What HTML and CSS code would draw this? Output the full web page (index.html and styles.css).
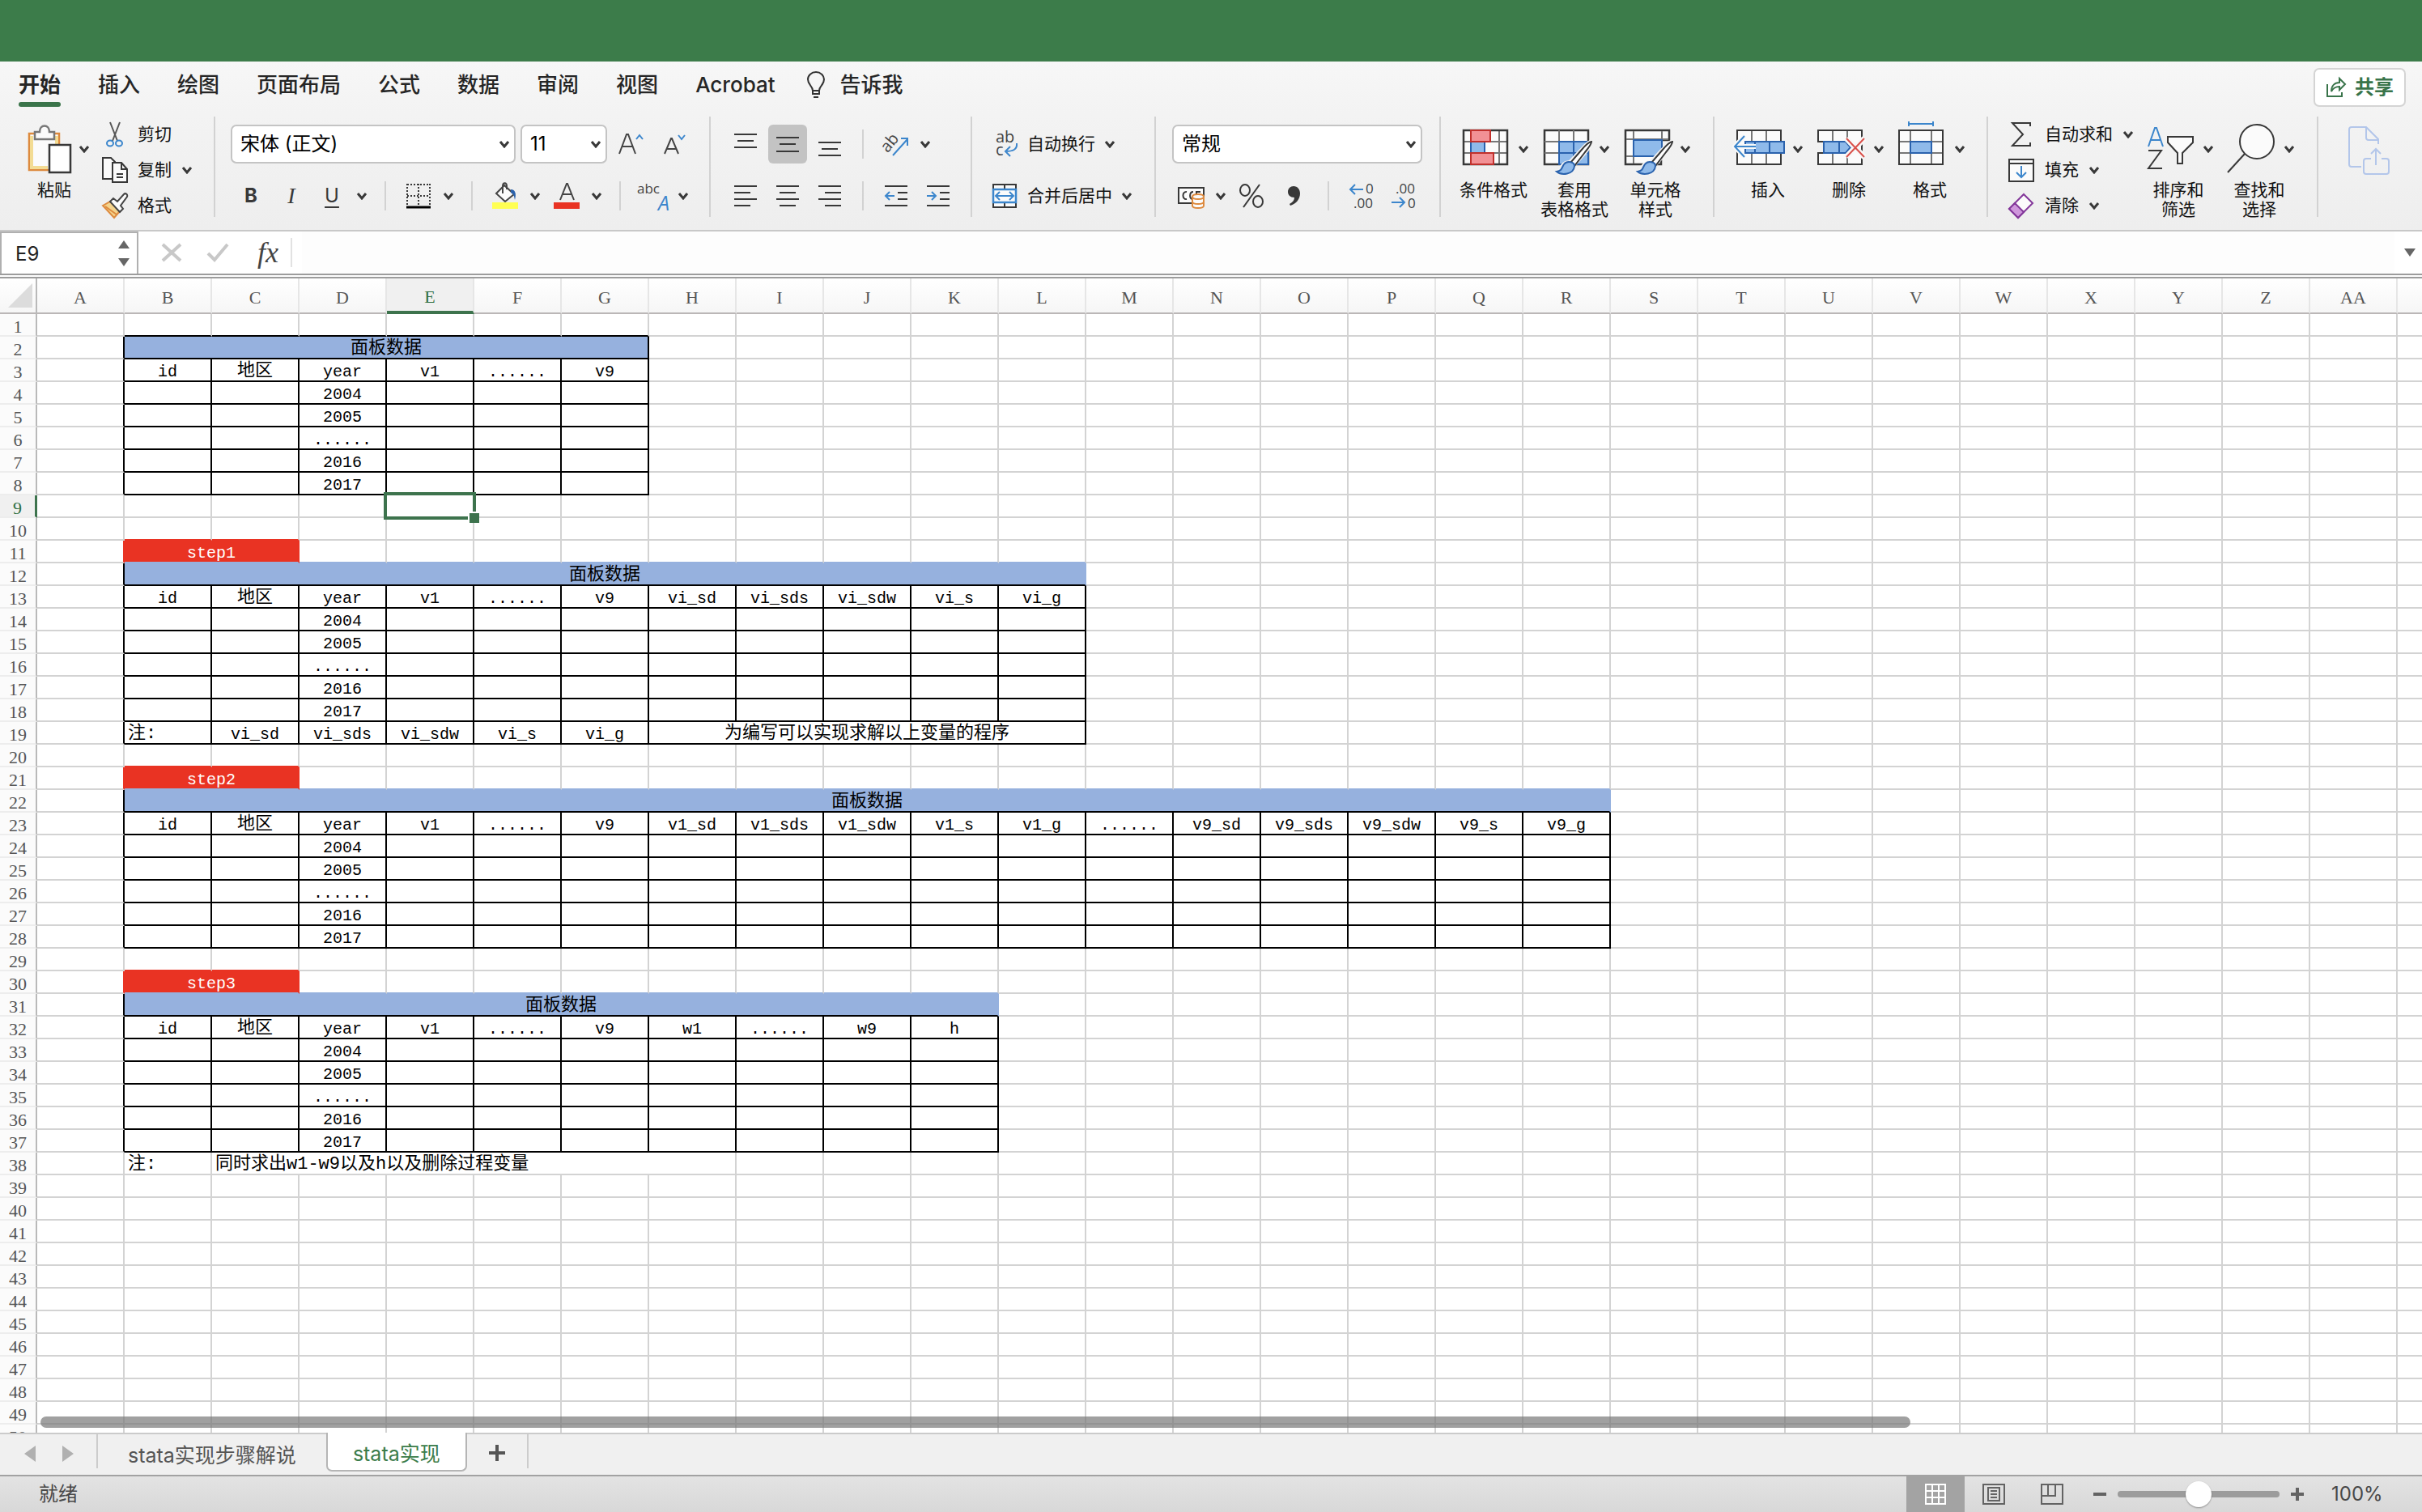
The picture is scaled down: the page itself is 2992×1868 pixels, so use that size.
FILE: index.html
```html
<!DOCTYPE html>
<html lang="zh-CN">
<head>
<meta charset="utf-8">
<title>stata实现</title>
<link rel="stylesheet" href="styles.css">
</head>
<body>
<svg class="defs" aria-hidden="true">
  <symbol id="chev" viewBox="0 0 14 10"><path d="M2 2l5 6 5-6" fill="none" stroke="#383838" stroke-width="3"/></symbol>
  <symbol id="brush" viewBox="0 0 64 68">
    <path d="M62 25c-3-1-8 4-13 10L34 51c-6-1-10 4-10 8-1 3-4 4-7 4 6 4 19 3 21-6l1-3 15-17c5-6 8-10 8-12z" fill="#f2f2f2" stroke="#f2f2f2" stroke-width="5"/>
    <path d="M61 25c-3 0-8 5-13 11L35 51l5 4 13-17c5-6 8-11 8-13z" fill="#fff" stroke="#383838" stroke-width="2"/>
    <path d="M40 55c0-5-9-7-13-2-3 4-2 8-9 9 6 5 21 4 22-7z" fill="#8fbaea" stroke="#2a62ad" stroke-width="2"/>
  </symbol>
</svg>

<header class="titlebar"></header>

<nav class="tabs">
  <button class="tab tab-on">开始</button>
  <button class="tab">插入</button>
  <button class="tab">绘图</button>
  <button class="tab">页面布局</button>
  <button class="tab">公式</button>
  <button class="tab">数据</button>
  <button class="tab">审阅</button>
  <button class="tab">视图</button>
  <button class="tab">Acrobat</button>
  <button class="tab tell">
    <svg width="24" height="34" viewBox="0 0 24 34" fill="none" stroke="#333" stroke-width="2"><path d="M8 24c0-6-6-7-6-14a10 9 0 0 1 20 0c0 7-6 8-6 14z"/><path d="M8 24v4h8v-4M9 32h6"/></svg>
    告诉我
  </button>
  <button class="share">
    <svg width="26" height="28" viewBox="0 0 26 28" fill="none" stroke="#39744a" stroke-width="2"><path d="M2 10v15h18v-5"/><path d="M7 19c0-7 4-11 10-11V3l7 7-7 7v-4c-5 0-8 2-10 6z"/></svg>
    共享
  </button>
</nav>

<section class="ribbon">
  <div class="group g-clip">
    <button class="big">
      <span class="pic"><svg width="64" height="68" viewBox="0 0 64 68" fill="none"><path d="M9 15h37v45H9z" fill="#fbfbfb" stroke="#dd8a3e" stroke-width="2.5"/><path d="M12 18v39h20M43 18v10" stroke="#f3dc94" stroke-width="4"/><path d="M16 22v-9h6c0-10 12-10 12 0h6v9z" fill="#fbfbfb" stroke="#777" stroke-width="2.5"/><path d="M34 29h26v34H34z" fill="#fff" stroke="#383838" stroke-width="2.5"/></svg>
      <svg class="chev"><use href="#chev"/></svg></span>
      <span>粘贴</span>
    </button>
    <div class="stack">
      <button class="line"><svg width="32" height="32" viewBox="0 0 32 32" fill="none" stroke-width="2"><path d="M10 1l9 23M22 1l-9 23" stroke="#555"/><ellipse cx="10" cy="27" rx="4" ry="3.500" stroke="#3c86cc"/><ellipse cx="21" cy="27" rx="4" ry="3.500" stroke="#3c86cc"/></svg>剪切</button>
      <button class="line"><svg width="32" height="32" viewBox="0 0 32 32" stroke="#383838" stroke-width="2" fill="#fbfbfb"><path d="M1 1h10l5 5v21H1z"/><path d="M13 7h11l7 8v16H13z"/><path d="M24 7v8h7M18 21h8M18 25h8" fill="none"/></svg>复制<svg class="chev"><use href="#chev"/></svg></button>
      <button class="line"><svg width="32" height="32" viewBox="0 0 32 32" stroke-width="2"><path d="M1 16l9-5 12 12-7 8z" fill="#f5d48c" stroke="#dd8a3e"/><path d="M4 17l14 10" stroke="#dd8a3e"/><path d="M10 11l4-4 5 4 8-9c2-2 5 0 4 3l-8 11 3 4-4 4z" fill="#fbfbfb" stroke="#444"/></svg>格式</button>
    </div>
  </div>

  <div class="group g-font">
    <div class="row">
      <label class="combo w-font"><select aria-label="字体"><option>宋体 (正文)</option></select><svg class="chev"><use href="#chev"/></svg></label>
      <label class="combo w-size"><select aria-label="字号"><option>11</option></select><svg class="chev"><use href="#chev"/></svg></label>
      <button class="tool t48" aria-label="增大字号"><svg width="34" height="32" viewBox="0 0 34 32" fill="none" stroke="#444" stroke-width="2"><path d="M2 28L11 4h2l9 24M6 19h12"/><path d="M23 10l4-5 4 5" stroke="#3c86cc"/></svg></button>
      <button class="tool t48" aria-label="减小字号"><svg width="34" height="32" viewBox="0 0 34 32" fill="none" stroke="#444" stroke-width="2"><path d="M4 28l8-19h1l8 19M7 22h11"/><path d="M21 5l4 5 4-5" stroke="#3c86cc"/></svg></button>
    </div>
    <div class="row flush">
      <button class="tool t50 bold">B</button>
      <button class="tool t50 ital">I</button>
      <button class="tool t50 under">U</button>
      <button class="caret" aria-label="下划线选项"><svg class="chev"><use href="#chev"/></svg></button>
      <span class="sep"></span>
      <button class="tool t40" aria-label="边框"><svg width="32" height="32" viewBox="0 0 32 32" fill="none" stroke="#383838" stroke-width="2"><path d="M2 2h28M2 16h28M2 1v27M16 1v27M30 1v27" stroke-dasharray="2 2"/><path d="M1 30h30" stroke="#000" stroke-width="3"/></svg></button>
      <button class="caret gap5" aria-label="边框选项"><svg class="chev"><use href="#chev"/></svg></button>
      <span class="sep"></span>
      <button class="tool t40" aria-label="填充颜色"><svg width="34" height="34" viewBox="0 0 34 34" fill="none"><path d="M6 14L16 4l12 11-11 9z" fill="#fbfbfb" stroke="#444" stroke-width="2"/><path d="M14 14V5c0-5 5-5 5 0v4" stroke="#444" stroke-width="2"/><path d="M24 9c6 0 7 6 5 13-1-6-2-8-5-9z" fill="#2a62ad"/><path d="M1 25h32v8H1z" fill="#ffff54"/></svg></button>
      <button class="caret gap5" aria-label="填充颜色选项"><svg class="chev"><use href="#chev"/></svg></button>
      <button class="tool t40 gap7" aria-label="字体颜色"><svg width="34" height="34" viewBox="0 0 34 34" fill="none"><path d="M9 22l8-20h1l8 20M12 15h11" stroke="#444" stroke-width="2"/><path d="M1 25h32v8H1z" fill="#e93323"/></svg></button>
      <button class="caret gap5" aria-label="字体颜色选项"><svg class="chev"><use href="#chev"/></svg></button>
      <span class="sep"></span>
      <button class="tool t40 abc"><span>abc</span><i>A</i></button>
      <button class="caret gap5" aria-label="拼音选项"><svg class="chev"><use href="#chev"/></svg></button>
    </div>
  </div>

  <div class="group g-align">
    <div class="row narrow">
      <button class="tool t48" aria-label="顶端对齐"><svg width="28" height="28" viewBox="0 0 28 28" stroke="#383838" stroke-width="2"><path d="M0 2h28M4 10h20M0 18h28"/></svg></button>
      <button class="tool t48 on" aria-label="垂直居中"><svg width="28" height="28" viewBox="0 0 28 28" stroke="#383838" stroke-width="2"><path d="M0 6h28M4 14h20M0 23h28"/></svg></button>
      <button class="tool t48" aria-label="底端对齐"><svg width="28" height="28" viewBox="0 0 28 28" stroke="#383838" stroke-width="2"><path d="M0 12h28M4 20h20M0 28h28"/></svg></button>
      <span class="sep"></span>
      <button class="tool t40" aria-label="方向"><svg width="34" height="34" viewBox="0 0 34 34"><text x="2" y="25" transform="rotate(-50 8 22)" font-size="20" fill="#444">ab</text><path d="M13 31L31 11M31 19v-9h-8" fill="none" stroke="#3c86cc" stroke-width="2"/></svg></button>
      <button class="caret" aria-label="方向选项"><svg class="chev"><use href="#chev"/></svg></button>
    </div>
    <div class="row narrow">
      <button class="tool t48" aria-label="左对齐"><svg width="28" height="28" viewBox="0 0 28 28" stroke="#383838" stroke-width="2"><path d="M0 2h28M0 10h20M0 18h28M0 26h20"/></svg></button>
      <button class="tool t48" aria-label="居中"><svg width="28" height="28" viewBox="0 0 28 28" stroke="#383838" stroke-width="2"><path d="M0 2h28M4 10h20M0 18h28M4 26h20"/></svg></button>
      <button class="tool t48" aria-label="右对齐"><svg width="28" height="28" viewBox="0 0 28 28" stroke="#383838" stroke-width="2"><path d="M0 2h28M8 10h20M0 18h28M8 26h20"/></svg></button>
      <span class="sep"></span>
      <button class="tool t40" aria-label="减少缩进"><svg width="28" height="28" viewBox="0 0 28 28" fill="none" stroke="#383838" stroke-width="2"><path d="M0 2h28M16 10h12M16 18h12M0 26h28"/><path d="M12 14H1M6 9l-5 5 5 5" stroke="#3c86cc"/></svg></button>
      <button class="tool t40 gap8" aria-label="增加缩进"><svg width="28" height="28" viewBox="0 0 28 28" fill="none" stroke="#383838" stroke-width="2"><path d="M0 2h28M16 10h12M16 18h12M0 26h28"/><path d="M0 14h11M6 9l5 5-5 5" stroke="#3c86cc"/></svg></button>
    </div>
  </div>

  <div class="group g-wrap">
    <button class="line tall"><svg class="ic40" viewBox="0 0 40 34"><g font-size="20" fill="#444"><text x="9" y="15">ab</text><text x="9" y="31">c</text></g><path d="M35 16c1 8-5 10-14 10M27 20l-6 6 6 6" fill="none" stroke="#3c86cc" stroke-width="2"/></svg>自动换行<svg class="chev"><use href="#chev"/></svg></button>
    <button class="line tall"><svg class="ic40" viewBox="0 0 40 34" fill="none"><path d="M6 3h28v28H6zM20 3v28" fill="#fbfbfb" stroke="#383838" stroke-width="2"/><path d="M6 9h28v16H6z" fill="#fbfbfb" stroke="#3c86cc" stroke-width="2.500"/><path d="M10 17h20M14 12l-5 5 5 5M26 12l5 5-5 5" stroke="#3c86cc" stroke-width="2"/></svg>合并后居中<svg class="chev"><use href="#chev"/></svg></button>
  </div>

  <div class="group g-num">
    <div class="row">
      <label class="combo w-num"><select aria-label="数字格式"><option>常规</option></select><svg class="chev"><use href="#chev"/></svg></label>
    </div>
    <div class="row flush">
      <button class="tool t48" aria-label="货币"><svg width="34" height="32" viewBox="0 0 34 32" fill="none" stroke="#383838" stroke-width="2"><path d="M1 6h31v19H1z" fill="#fbfbfb"/><path d="M11 11c-6-1-6 10 0 9M19 11c-5 0-5 9-1 9M28 11h-5v9" /><path d="M18 17c0-4 14-4 14 0v11c0 4-14 4-14 0z" fill="#fbfbfb" stroke="#dd8a3e"/><path d="M18 17c0 4 14 4 14 0M18 23c0 4 14 4 14 0" stroke="#dd8a3e"/></svg></button>
      <button class="caret" aria-label="货币选项"><svg class="chev"><use href="#chev"/></svg></button>
      <button class="tool t52" aria-label="百分比"><svg width="32" height="32" viewBox="0 0 32 32" fill="none" stroke="#383838" stroke-width="2"><ellipse cx="8" cy="9" rx="6" ry="7"/><ellipse cx="24" cy="23" rx="6" ry="7"/><path d="M26 2L6 30"/></svg></button>
      <button class="tool t52" aria-label="千位分隔"><svg width="20" height="28" viewBox="0 0 20 28"><path d="M10 2c5 0 8 4 8 9 0 7-5 13-12 15l-1-2c4-2 6-5 6-8-5 0-8-3-8-7s3-7 7-7z" fill="#383838"/></svg></button>
      <span class="sep"></span>
      <button class="tool t40" aria-label="增加小数位数"><svg width="34" height="34" viewBox="0 0 34 34"><g font-size="17" fill="#444"><text x="22" y="14">0</text><text x="7" y="32">.00</text></g><path d="M19 9H3M9 3L3 9l6 6" fill="none" stroke="#3c86cc" stroke-width="2"/></svg></button>
      <button class="tool t40 gap12" aria-label="减少小数位数"><svg width="34" height="34" viewBox="0 0 34 34"><g font-size="17" fill="#444"><text x="7" y="14">.00</text><text x="22" y="32">0</text></g><path d="M2 25h16M12 19l6 6-6 6" fill="none" stroke="#3c86cc" stroke-width="2"/></svg></button>
    </div>
  </div>

  <div class="group g-style">
    <button class="big">
      <span class="pic"><svg width="64" height="68" viewBox="0 0 64 68"><path d="M3 11h54v42H3z" fill="#fbfbfb"/><path d="M12 11v42M29 11v42M47 11v42M3 25h54M3 39h54" stroke="#777" stroke-width="2"/><path d="M3 11h54v42H3z" fill="none" stroke="#383838" stroke-width="2.500"/><path d="M12 25h17v14H12z" fill="#8fbaea" stroke="#2a62ad" stroke-width="2"/><path d="M12 11h24v14H12zM12 39h28v14H12z" fill="#f29195" stroke="#c0302c" stroke-width="2"/></svg>
      <svg class="chev"><use href="#chev"/></svg></span>
      <span>条件格式</span>
    </button>
    <button class="big">
      <span class="pic"><svg width="64" height="68" viewBox="0 0 64 68"><path d="M3 11h54v42H3z" fill="#fbfbfb" stroke="#383838" stroke-width="2.500"/><path d="M21 11v42M39 11v14M3 25h18M3 39h18" stroke="#777" stroke-width="2"/><path d="M21 25h36v28H21zM39 25v28M21 39h36" fill="#8fbaea" stroke="#2a62ad" stroke-width="2"/><use href="#brush"/></svg>
      <svg class="chev"><use href="#chev"/></svg></span>
      <span>套用<br>表格格式</span>
    </button>
    <button class="big">
      <span class="pic"><svg width="64" height="68" viewBox="0 0 64 68"><path d="M3 11h54v12H47v30H3z" fill="#fbfbfb" stroke="#383838" stroke-width="2.500"/><path d="M13 12v40M48 12v10M4 22h52M4 43h20" stroke="#777" stroke-width="2"/><path d="M13 23h35v20H13z" fill="#8fbaea" stroke="#2a62ad" stroke-width="2"/><use href="#brush"/></svg>
      <svg class="chev"><use href="#chev"/></svg></span>
      <span>单元格<br>样式</span>
    </button>
  </div>

  <div class="group g-cells">
    <button class="big">
      <span class="pic"><svg width="64" height="68" viewBox="0 0 64 68"><path d="M2 11h54v42H2z" fill="#fbfbfb" stroke="#383838" stroke-width="2"/><path d="M20 12v40M38 12v40" stroke="#777" stroke-width="2"/><path d="M12 25h48v14H12zM24 25v14M42 25v14" fill="#8fbaea" stroke="#2a62ad" stroke-width="2"/><path d="M11 18L-1 31l12 13M0 31h25" fill="none" stroke="#f8f8f8" stroke-width="6"/><path d="M11 18L-1 31l12 13M0 31h25" fill="none" stroke="#3c86cc" stroke-width="2"/></svg>
      <svg class="chev"><use href="#chev"/></svg></span>
      <span>插入</span>
    </button>
    <button class="big">
      <span class="pic"><svg width="64" height="68" viewBox="0 0 64 68"><path d="M9 25H2V11h54v42H2V39h7z" fill="#fbfbfb" stroke="#383838" stroke-width="2"/><path d="M20 12v12M38 12v12M20 40v12M38 40v12" stroke="#777" stroke-width="2"/><path d="M9 25h27l6 7-6 7H9zM28 25v14" fill="#8fbaea" stroke="#2a62ad" stroke-width="2"/><path d="M37 21l22 23M59 21L37 44" stroke="#f8f8f8" stroke-width="7"/><path d="M37 21l22 23M59 21L37 44" stroke="#d9504a" stroke-width="2"/></svg>
      <svg class="chev"><use href="#chev"/></svg></span>
      <span>删除</span>
    </button>
    <button class="big">
      <span class="pic"><svg width="64" height="68" viewBox="0 0 64 68"><path d="M2 11h54v42H2z" fill="#fbfbfb" stroke="#383838" stroke-width="2"/><path d="M16 12v40M42 12v40M3 25h52M3 39h52" stroke="#777" stroke-width="2"/><path d="M16 25h26v14H16z" fill="#8fbaea" stroke="#2a62ad" stroke-width="2"/><path d="M14 3h30M14 0v6M44 0v6" stroke="#3c86cc" stroke-width="2"/></svg>
      <svg class="chev"><use href="#chev"/></svg></span>
      <span>格式</span>
    </button>
  </div>

  <div class="group g-edit">
    <div class="stack">
      <button class="line"><svg width="34" height="32" viewBox="0 0 34 32" fill="none" stroke="#383838" stroke-width="2"><path d="M28 6V2H6l13 14L6 30h22v-4"/></svg>自动求和<svg class="chev"><use href="#chev"/></svg></button>
      <button class="line"><svg width="34" height="32" viewBox="0 0 34 32" fill="none" stroke="#383838" stroke-width="2"><path d="M2 3h30v27H2z" fill="#fbfbfb"/><path d="M2 8h30"/><path d="M17 11v14M11 19l6 6 6-6" stroke="#3c86cc"/></svg>填充<svg class="chev"><use href="#chev"/></svg></button>
      <button class="line"><svg width="34" height="32" viewBox="0 0 34 32" stroke="#83379a" stroke-width="2"><path d="M20 2l11 11-18 18L2 20z" fill="#fbfbfb"/><path d="M9 13l11 11-7 7L2 20z" fill="#cf97dc"/></svg>清除<svg class="chev"><use href="#chev"/></svg></button>
    </div>
    <button class="big">
      <span class="pic"><svg width="64" height="68" viewBox="0 0 64 68" fill="none" stroke="#383838" stroke-width="2"><path d="M3 31l8-23h2l8 23M6 23h12" stroke="#3c86cc"/><path d="M3 36h16L3 58h17"/><path d="M27 19h31v7L45 39v13h-6V39L27 26z" fill="#fbfbfb"/></svg>
      <svg class="chev"><use href="#chev"/></svg></span>
      <span>排序和<br>筛选</span>
    </button>
    <button class="big">
      <span class="pic"><svg width="64" height="68" viewBox="0 0 64 68" stroke="#383838" stroke-width="2"><circle cx="37" cy="25" r="21" fill="#fbfbfb"/><path d="M22 40L1 63"/></svg>
      <svg class="chev"><use href="#chev"/></svg></span>
      <span>查找和<br>选择</span>
    </button>
  </div>

  <div class="group g-pdf">
    <button class="plain" aria-label="创建 PDF 并共享"><svg width="52" height="60" viewBox="0 0 52 60" fill="none" stroke="#b3c6ea" stroke-width="2"><path d="M16 50H4a3 3 0 0 1-3-3V4a3 3 0 0 1 3-3h18l15 15v6M22 1v13a3 3 0 0 0 3 3h12"/><path d="M28 40h-6a3 3 0 0 0-3 3v13a3 3 0 0 0 3 3h25a3 3 0 0 0 3-3V43a3 3 0 0 0-3-3h-6M34 48V28M28 34l6-6 6 6"/></svg></button>
  </div>
</section>

<section class="formula">
  <div class="namebox">
    <input class="name" aria-label="名称框" value="E9">
    <svg width="16" height="32" viewBox="0 0 16 32" fill="#666"><path d="M8 0l7 10H1zM8 32l7-10H1z"/></svg>
  </div>
  <div class="fx">
    <svg width="26" height="24" viewBox="0 0 26 24" stroke="#c8c8c8" stroke-width="4"><path d="M2 2l22 20M24 2L2 22"/></svg>
    <svg width="28" height="24" viewBox="0 0 28 24" fill="none" stroke="#c8c8c8" stroke-width="4"><path d="M2 13l8 8L26 2"/></svg>
    <i>fx</i>
  </div>
  <input class="entry" aria-label="编辑栏">
  <button class="plain expand" aria-label="展开编辑栏"><svg width="14" height="10" viewBox="0 0 14 10"><path d="M0 0h14L7 10z" fill="#666"/></svg></button>
</section>

<main class="sheet">
  <table class="grid" id="grid"></table>
  <div class="hscroll"></div>
</main>

<footer class="sheets">
  <div class="arrows">
    <svg width="16" height="22" viewBox="0 0 16 22"><path d="M15 1v20L1 11z" fill="#b0b0b0"/></svg>
    <svg width="16" height="22" viewBox="0 0 16 22"><path d="M1 1v20l14-10z" fill="#b0b0b0"/></svg>
  </div>
  <button class="sheet-tab">stata实现步骤解说</button>
  <button class="sheet-tab sheet-on">stata实现</button>
  <button class="add" aria-label="新建工作表"><svg width="20" height="20" viewBox="0 0 20 20"><path d="M10 0v20M0 10h20" stroke="#555" stroke-width="4"/></svg></button>
</footer>

<footer class="status">
  <span class="ready">就绪</span>
  <button class="view view-on" aria-label="普通视图"><svg width="28" height="28" viewBox="0 0 28 28" fill="none" stroke="#fff" stroke-width="2"><path d="M2 2h24v24H2zM10 2v24M18 2v24M2 10h24M2 18h24"/></svg></button>
  <button class="view" aria-label="页面布局视图"><svg width="28" height="28" viewBox="0 0 28 28" fill="none" stroke="#636363" stroke-width="2"><path d="M1 2h26v24H1zM7 6h14v16H7zM10 10h8M10 14h8M10 18h8"/></svg></button>
  <button class="view" aria-label="分页预览"><svg width="28" height="28" viewBox="0 0 28 28" fill="none" stroke="#636363" stroke-width="2"><path d="M1 2h26v24H1zM1 16h17V2M9 2v14"/></svg></button>
  <button class="zoom" aria-label="缩小"><svg width="16" height="16" viewBox="0 0 16 16"><path d="M0 8h16" stroke="#636363" stroke-width="4"/></svg></button>
  <input class="slider" type="range" min="0" max="200" value="100" aria-label="缩放">
  <button class="zoom" aria-label="放大"><svg width="16" height="16" viewBox="0 0 16 16"><path d="M0 8h16M8 0v16" stroke="#636363" stroke-width="4"/></svg></button>
  <output class="percent">100%</output>
</footer>
<script src="sheet.js"></script>
</body>
</html>
```
FILE: styles.css
```css
* { box-sizing: border-box; }

html, body { height: 100%; }

body {
  margin: 0;
  display: flex;
  flex-direction: column;
  overflow: hidden;
  background: #fff;
  color: #111;
  font: 21px/24px Inter, "Noto Sans CJK SC", sans-serif;
}

button, input, select { font: inherit; color: inherit; }

button {
  flex: none;
  margin: 0;
  padding: 0;
  border: 0;
  background: none;
  white-space: nowrap;
}

svg { display: block; flex: none; overflow: visible; }
svg text { font-family: "Open Sans", sans-serif; }

.defs { position: absolute; width: 0; height: 0; }
.chev { width: 14px; height: 10px; }

/* Title bar and ribbon tabs */
.titlebar { flex: none; height: 76px; background: #3c7c4a; }

.tabs {
  flex: none;
  display: flex;
  gap: 46px;
  height: 64px;
  padding: 0 20px 0 23px;
  background: linear-gradient(#f7f7f7, #f3f3f3);
  font-size: 26px;
  font-weight: 500;
}

.tab {
  height: 56px;
  padding-top: 8px;
  border-bottom: 6px solid transparent;
  color: #262626;
}

.tab-on { position: relative; font-weight: 700; }

.tab-on::after {
  content: "";
  position: absolute;
  inset: 50px 0 -6px;
  border-radius: 3px;
  background: #3a744a;
}

.tell { display: flex; align-items: center; gap: 18px; margin-left: -8px; }

.share {
  display: flex;
  align-items: center;
  justify-content: center;
  gap: 10px;
  width: 114px;
  height: 48px;
  margin: 8px 0 0 auto;
  border: 2px solid #d4d4d4;
  border-radius: 7px;
  background: #fff;
  color: #39744a;
  font-size: 24px;
  font-weight: 700;
}

/* Ribbon */
.ribbon {
  flex: none;
  display: flex;
  height: 146px;
  padding: 4px 0 16px;
  border-bottom: 2px solid #c8c8c8;
  background: linear-gradient(#f3f3f3, #eee);
}

.group { flex: none; height: 124px; border-right: 2px solid #d2d2d2; }

.g-clip { display: flex; padding: 0 26px 0 17px; }
.g-font { padding: 10px 18px 0 19px; }
.g-align { padding: 10px 20px 0 19px; }
.g-wrap { padding: 10px 27px 0 20px; }
.g-num { padding: 10px 21px 0 20px; }
.g-style { display: flex; padding: 0 21px 0 15px; }
.g-cells { display: flex; padding: 0 20px 0 16px; }
.g-edit { display: flex; padding: 0 21px 0 24px; }
.g-pdf { padding: 12px 0 0 37px; border: 0; }

.row { display: flex; align-items: center; gap: 6px; height: 48px; }
.row + .row, .tall + .tall { margin-top: 16px; }
.row.flush { gap: 0; }
.row.narrow { gap: 4px; }

.tool {
  display: flex;
  align-items: center;
  justify-content: center;
  height: 48px;
  border-radius: 6px;
  color: #383838;
}

.t40 { width: 40px; }
.t48 { width: 48px; }
.t50 { width: 50px; }
.t52 { width: 52px; }
.on { background: #c3c3c3; }
.bold { font-size: 24px; font-weight: 700; }
.ital { font: italic 28px/28px "Liberation Serif", serif; }
.under { font-size: 24px; text-decoration: underline; text-underline-offset: 5px; text-decoration-thickness: 2px; }
.gap5 { margin-left: 5px; }
.gap7 { margin-left: 7px; }
.gap8 { margin-left: 8px; }
.gap12 { margin-left: 12px; }

.caret { display: flex; align-items: center; justify-content: center; width: 24px; height: 48px; }

.sep { flex: none; width: 2px; height: 36px; margin: 0 20px 0 16px; background: #d2d2d2; }
.narrow .sep { margin: 0 16px 0 12px; }

.abc { flex-direction: column; color: #444; font: 17px/16px "Open Sans", sans-serif; }
.abc span { align-self: flex-start; }
.abc i { align-self: flex-end; color: #3c86cc; font-size: 25px; line-height: 18px; }

.combo { display: grid; align-items: center; }
.combo > * { grid-area: 1 / 1; }
.combo .chev { justify-self: end; margin-right: 7px; pointer-events: none; }

.combo select {
  appearance: none;
  width: 100%;
  height: 48px;
  padding: 0 10px;
  border: 2px solid #c4c4c4;
  border-radius: 7px;
  background: #fff;
  color: #000;
  font-size: 24px;
}

.w-font { width: 352px; }
.w-size { width: 107px; }
.w-num { width: 309px; }

.big {
  width: 100px;
  padding-top: 6px;
  display: flex;
  flex-direction: column;
  align-items: center;
  gap: 5px;
}

.pic { display: flex; align-items: center; gap: 6px; padding-left: 4px; }

.stack { display: flex; flex-direction: column; gap: 16px; padding-top: 8px; }
.g-clip .stack { padding-left: 9px; }
.g-edit .stack { width: 161px; }

.line { display: flex; align-items: center; gap: 12px; height: 28px; }
.tall { height: 48px; gap: 8px; }
.tall .chev { margin-left: 3px; }
.ic40 { width: 40px; height: 34px; }
.plain { display: block; }

/* Formula bar */
.formula {
  flex: none;
  display: flex;
  height: 58px;
  border-bottom: 6px double #9c9c9c;
  background: #fff;
}

.namebox {
  display: flex;
  align-items: center;
  width: 171px;
  padding-right: 8px;
  border: solid #b0b0b0;
  border-width: 2px 2px 0;
}

.name, .entry { min-width: 0; flex: 1; border: 0; outline: 0; background: none; }
.name { padding: 0 0 0 17px; font-size: 24px; color: #222; }

.fx { display: flex; align-items: center; gap: 30px; margin: 8px 0; padding: 0 15px 0 28px; border-right: 2px solid #e2e2e2; }
.fx i { margin-left: 5px; color: #444; font: italic 36px/36px "Liberation Serif", serif; }
.entry { margin: 0 12px; background: #fdfdfd; }
.expand { align-self: center; padding-right: 8px; }

/* Worksheet */
.sheet { position: relative; flex: 1; min-height: 0; overflow: hidden; }

.grid {
  width: 3070px;
  table-layout: fixed;
  border-collapse: separate;
  border-spacing: 0;
  font: 20px/20px "Liberation Mono", "Noto Sans CJK SC", monospace;
  color: #000;
}

.grid col { width: 108px; }
.grid col:first-child { width: 46px; }

.grid th, .grid td {
  height: 28px;
  padding: 5px 0 0;
  border: solid #d3d3d3;
  border-width: 0 2px 2px 0;
  text-align: center;
  font-weight: 400;
  white-space: nowrap;
}

.grid th { font-family: "Liberation Serif", serif; font-size: 22px; }

.grid thead th {
  height: 44px;
  border-color: #e6e6e6 #e6e6e6 #bbb7b7;
  background: linear-gradient(#fff, #f6f6f6);
  color: #555;
}

.grid tbody th { border-color: #ededed #b9b9b9 #ededed; background: #fbfbfb; color: #555; }
.grid .corner { border-right-color: #b9b9b9; padding: 0; }
.corner svg { margin-left: 10px; }

.grid thead .here { border-bottom: 4px solid #3d734d; background: #f0f0f0; color: #2f6f43; }
.grid tbody .here { border-right: 3px solid #3d734d; background: #f0f0f0; color: #2f6f43; }

.grid .cjk { padding-top: 4px; font-size: 22px; }
.grid .left { padding-left: 4px; text-align: left; }
.grid .title { background: #96b1de; }
.grid .step { background: #e93323; color: #fff; }

.grid .right-blue { border-right-color: #96b1de; }
.grid .right-red { border-right-color: #e93323; }
.grid .right-black { border-right-color: #000; }
.grid .bottom-blue { border-bottom-color: #96b1de; }
.grid .bottom-red { border-bottom-color: #e93323; }
.grid .bottom-black { border-bottom-color: #000; }

.grid .active { position: relative; }

.cursor { position: absolute; inset: -4px; border: 4px solid #3d734d; }

.cursor::after {
  content: "";
  position: absolute;
  right: -8px;
  bottom: -8px;
  width: 12px;
  height: 12px;
  border: solid #fff;
  border-width: 2px 0 0 2px;
  background: #3d734d;
}

.hscroll {
  position: absolute;
  left: 50px;
  right: 632px;
  bottom: 6px;
  height: 14px;
  border-radius: 7px;
  background: rgba(120, 120, 120, .7);
}

/* Sheet tabs */
.sheets {
  flex: none;
  display: flex;
  height: 54px;
  border-top: 2px solid #cbcbcb;
  border-bottom: 2px solid #a2a2a2;
  background: #f0f0f0;
  color: #555;
  font-size: 25px;
}

.arrows { display: flex; align-items: center; gap: 31px; height: 42px; padding: 6px 27px 0 29px; border-right: 2px solid #ccc; }
.sheet-tab { height: 48px; padding: 4px 37px 0; }

.sheet-on {
  margin-top: -2px;
  padding: 6px 31px 0;
  border: 2px solid #b5b5b5;
  border-top: 0;
  border-radius: 0 0 7px 7px;
  background: #fff;
  color: #3b7c4a;
}

.add { display: flex; align-items: center; justify-content: center; width: 76px; height: 42px; padding-top: 4px; border-right: 2px solid #ccc; }

/* Status bar */
.status {
  flex: none;
  display: flex;
  align-items: center;
  height: 44px;
  background: linear-gradient(#e3e3e3, #d8d8d8);
  color: #484848;
  font-size: 24px;
}

.ready { margin-right: auto; padding-left: 48px; }
.view { display: flex; align-items: center; justify-content: center; width: 72px; height: 44px; }
.view-on { background: #a3a3a3; }
.zoom { display: flex; justify-content: center; width: 32px; }
.view + .zoom { margin-left: 7px; }

.slider { appearance: none; width: 200px; height: 32px; margin: 0 6px; background: none; }
.slider::-webkit-slider-runnable-track { height: 8px; border-radius: 4px; background: #9c9c9c; }

.slider::-webkit-slider-thumb {
  appearance: none;
  width: 32px;
  height: 32px;
  margin-top: -12px;
  border-radius: 50%;
  background: #fff;
  box-shadow: 0 1px 2px rgba(0, 0, 0, .35);
}

.percent { width: 112px; margin-left: 26px; }
```
FILE: sheet.js
```js
const COLS = 28;
const ROWS = 50;
const colName = c => (c < 26 ? "" : "A") + String.fromCharCode(65 + c % 26);

const values = {};
const spans = {};
const styles = {};
const right = {};
const bottom = {};
const key = (r, c) => r + ":" + c;

// Paints an area's fill over the gridlines above it and to its left.
function fill(r, c1, c2, color) {
  right[key(r, c1 - 1)] = color;
  right[key(r, c2)] = color;
  for (let c = c1; c <= c2; c++) bottom[key(r - 1, c)] = color;
}

// Draws black lines round every cell of an area.
function box(r1, r2, c1, c2) {
  for (let r = r1; r <= r2; r++) for (let c = c1 - 1; c <= c2; c++) right[key(r, c)] = "black";
  for (let r = r1 - 1; r <= r2; r++) for (let c = c1; c <= c2; c++) bottom[key(r, c)] = "black";
}

function merge(r, c, n, text, style) {
  values[key(r, c)] = text;
  spans[key(r, c)] = n;
  styles[key(r, c)] = style;
}

function panel(r, heads, lastRow) {
  const last = heads.length;
  merge(r, 1, last, "面板数据", "title");
  fill(r, 1, last, "blue");
  box(r + 1, lastRow, 1, last);
  right[key(r, 0)] = "black";
  heads.forEach((h, i) => { values[key(r + 1, i + 1)] = h; });
  ["2004", "2005", "......", "2016", "2017"].forEach((y, i) => { values[key(r + 2 + i, 3)] = y; });
}

function step(r, text) {
  fill(r, 1, 2, "red");
  merge(r, 1, 2, text, "step");
}

const base = ["id", "地区", "year", "v1", "......", "v9"];
const names = p => ["_sd", "_sds", "_sdw", "_s", "_g"].map(s => p + s);

panel(2, base, 8);
box(2, 2, 1, 6);

step(11, "step1");
panel(12, [...base, ...names("vi")], 19);
values[key(19, 1)] = "注:";
styles[key(19, 1)] = "left";
names("vi").forEach((n, i) => { values[key(19, i + 2)] = n; });
merge(19, 7, 5, "为编写可以实现求解以上变量的程序", "");

step(21, "step2");
panel(22, [...base, ...names("v1"), "......", ...names("v9")], 28);

step(30, "step3");
panel(31, [...base, "w1", "......", "w9", "h"], 37);
values[key(38, 1)] = "注:";
styles[key(38, 1)] = "left";
merge(38, 2, 6, "同时求出w1-w9以及h以及删除过程变量", "left");

let html = "<colgroup>" + "<col>".repeat(COLS + 1) + "</colgroup><thead><tr>" +
  '<th class="corner"><svg width="30" height="30" viewBox="0 0 30 30"><path d="M30 0v30H0z" fill="#dcdcdc"/></svg></th>';
for (let c = 0; c < COLS; c++) html += `<th scope="col"${c === 4 ? ' class="here"' : ""}>${c < 27 ? colName(c) : ""}</th>`;
html += "</tr></thead><tbody>";

for (let r = 1; r <= ROWS; r++) {
  html += `<tr><th scope="row"${r === 9 ? ' class="here"' : ""}>${r}</th>`;
  for (let c = 0; c < COLS;) {
    const k = key(r, c);
    const n = spans[k] || 1;
    const text = values[k] || "";
    const edge = right[key(r, c + n - 1)];
    const active = r === 9 && c === 4;
    const cls = [
      styles[k],
      /[\u4e00-\u9fff]/.test(text) && "cjk",
      edge && "right-" + edge,
      bottom[k] && "bottom-" + bottom[k],
      active && "active"
    ].filter(Boolean).join(" ");
    html += `<td${cls ? ` class="${cls}"` : ""}${n > 1 ? ` colspan="${n}"` : ""}>${active ? '<div class="cursor"></div>' : text}</td>`;
    c += n;
  }
  html += "</tr>";
}
document.getElementById("grid").innerHTML = html + "</tbody>";
```
